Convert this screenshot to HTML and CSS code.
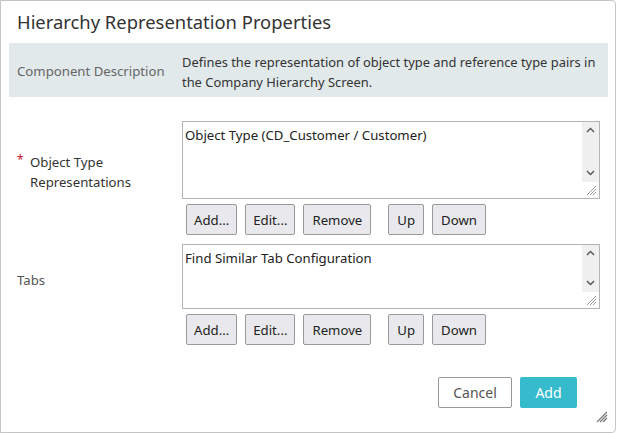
FILE: index.html
```html
<!DOCTYPE html>
<html lang="en">
<head>
    <meta charset="UTF-8">
    <title>Hierarchy Representation Properties</title>
    <link rel="stylesheet" href="styles.css">
</head>
<body>
    <div class="dialog">
        <h1 class="title">Hierarchy Representation Properties</h1>

        <div class="desc">
            <div class="desc-label">Component Description</div>
            <div class="desc-text">Defines the representation of object type and reference type pairs in the Company Hierarchy Screen.</div>
        </div>

        <div class="form">
            <div class="row">
                <div class="label label-first"><span class="req">*</span><span>Object Type<br>Representations</span></div>
                <div class="field">
                    <div class="list list-tall">
                        <div class="list-text">Object Type (CD_Customer / Customer)</div>
                        <div class="scroll">
                            <svg width="9" height="6" viewBox="0 0 9 6"><path d="M1 5 L4.5 1.5 L8 5" fill="none" stroke="#555" stroke-width="1.4"/></svg>
                            <svg width="9" height="6" viewBox="0 0 9 6"><path d="M1 1 L4.5 4.5 L8 1" fill="none" stroke="#555" stroke-width="1.4"/></svg>
                        </div>
                        <svg class="grip" width="12" height="12" viewBox="0 0 12 12"><path d="M11 2 L2 11 M11 5 L5 11 M11 8 L8 11" stroke="#999" stroke-width="1"/></svg>
                    </div>
                    <div class="buttons">
                        <button class="btn">Add...</button>
                        <button class="btn">Edit...</button>
                        <button class="btn btn-remove">Remove</button>
                        <button class="btn btn-up">Up</button>
                        <button class="btn btn-down">Down</button>
                    </div>
                </div>
            </div>

            <div class="row row-second">
                <div class="label label-second">Tabs</div>
                <div class="field">
                    <div class="list list-short">
                        <div class="list-text">Find Similar Tab Configuration</div>
                        <div class="scroll">
                            <svg width="9" height="6" viewBox="0 0 9 6"><path d="M1 5 L4.5 1.5 L8 5" fill="none" stroke="#555" stroke-width="1.4"/></svg>
                            <svg width="9" height="6" viewBox="0 0 9 6"><path d="M1 1 L4.5 4.5 L8 1" fill="none" stroke="#555" stroke-width="1.4"/></svg>
                        </div>
                        <svg class="grip" width="12" height="12" viewBox="0 0 12 12"><path d="M11 2 L2 11 M11 5 L5 11 M11 8 L8 11" stroke="#999" stroke-width="1"/></svg>
                    </div>
                    <div class="buttons">
                        <button class="btn">Add...</button>
                        <button class="btn">Edit...</button>
                        <button class="btn btn-remove">Remove</button>
                        <button class="btn btn-up">Up</button>
                        <button class="btn btn-down">Down</button>
                    </div>
                </div>
            </div>
        </div>

        <div class="footer">
            <button class="btn-cancel">Cancel</button>
            <button class="btn-add">Add</button>
        </div>

        <svg class="dialog-grip" width="12" height="12" viewBox="0 0 12 12"><path d="M11 1 L1 11 M11 4 L4 11 M11 7 L7 11" stroke="#777" stroke-width="1.2"/></svg>
    </div>
</body>
</html>
```

FILE: styles.css
```css
body {
    margin: 0;
    background: #fff;
    font-family: "Noto Sans", "Open Sans", sans-serif;
    color: #333;
}
.dialog {
    position: relative;
    width: 616px;
    height: 433px;
    box-sizing: border-box;
    border: 1px solid #c4c4c4;
    border-radius: 0 4px 4px 0;
    background: #fff;
}
.title {
    margin: 0;
    padding: 8px 16px 8px;
    font-size: 18.4px;
    line-height: 26px;
    font-weight: normal;
    color: #333;
}
.desc {
    display: grid;
    grid-template-columns: 173px 1fr;
    align-items: center;
    margin: 0 7px 0 8px;
    height: 54px;
    background: #e2e9eb;
    font-size: 13.2px;
    line-height: 20px;
}
.desc-label {
    padding-left: 8px;
    padding-top: 2px;
    color: #666;
}
.desc-text {
    padding-top: 3px;
    font-size: 12.9px;
    color: #333;
}
.form {
    margin: 24px 7px 0 8px;
}
.row {
    display: grid;
    grid-template-columns: 173px 418px;
}
.row-second {
    margin-top: 9px;
}
.label {
    padding-left: 8px;
    font-size: 13.2px;
    line-height: 20px;
    color: #333;
}
.label-first {
    display: flex;
    margin-top: 31px;
}
.label-second {
    margin-top: 26px;
    color: #555;
}
.req {
    width: 13px;
    color: #c8102e;
    font-size: 12px;
    line-height: 16px;
}
.list {
    position: relative;
    display: flex;
    box-sizing: border-box;
    border: 1px solid #b4b4b4;
    background: #fff;
}
.list-tall {
    height: 78px;
}
.list-short {
    height: 65px;
}
.list-text {
    flex: 1;
    padding: 4px 2px;
    font-size: 13.2px;
    line-height: 19px;
    color: #222;
}
.scroll {
    display: flex;
    flex-direction: column;
    justify-content: space-between;
    align-items: center;
    width: 17px;
    margin-bottom: 16px;
    padding: 5px 0 6px;
    box-sizing: border-box;
    background: #f0f0f0;
}
.grip {
    position: absolute;
    right: 2px;
    bottom: 2px;
}
.buttons {
    display: flex;
    gap: 8px;
    margin-top: 5px;
    padding-left: 4px;
}
.btn {
    height: 31px;
    padding: 0 7px;
    border: 1px solid #9a9a9a;
    border-radius: 2px;
    background: #e9e9ed;
    font-family: inherit;
    font-size: 13.2px;
    color: #222;
}
.btn-remove {
    padding: 0 8px;
}
.btn-up {
    margin-left: 9px;
    padding: 0 8px;
}
.btn-down {
    padding: 0 8px;
}
.footer {
    display: flex;
    justify-content: flex-end;
    gap: 8px;
    margin-top: 32px;
    padding-right: 38px;
}
.btn-cancel,
.btn-add {
    height: 31px;
    border-radius: 2px;
    font-family: inherit;
    font-size: 14px;
}
.btn-cancel {
    width: 74px;
    border: 1px solid #999;
    background: #fff;
    color: #555;
}
.btn-add {
    width: 57px;
    border: none;
    background: #35bbcc;
    color: #fff;
}
.dialog-grip {
    position: absolute;
    right: 7px;
    bottom: 9px;
}
```
